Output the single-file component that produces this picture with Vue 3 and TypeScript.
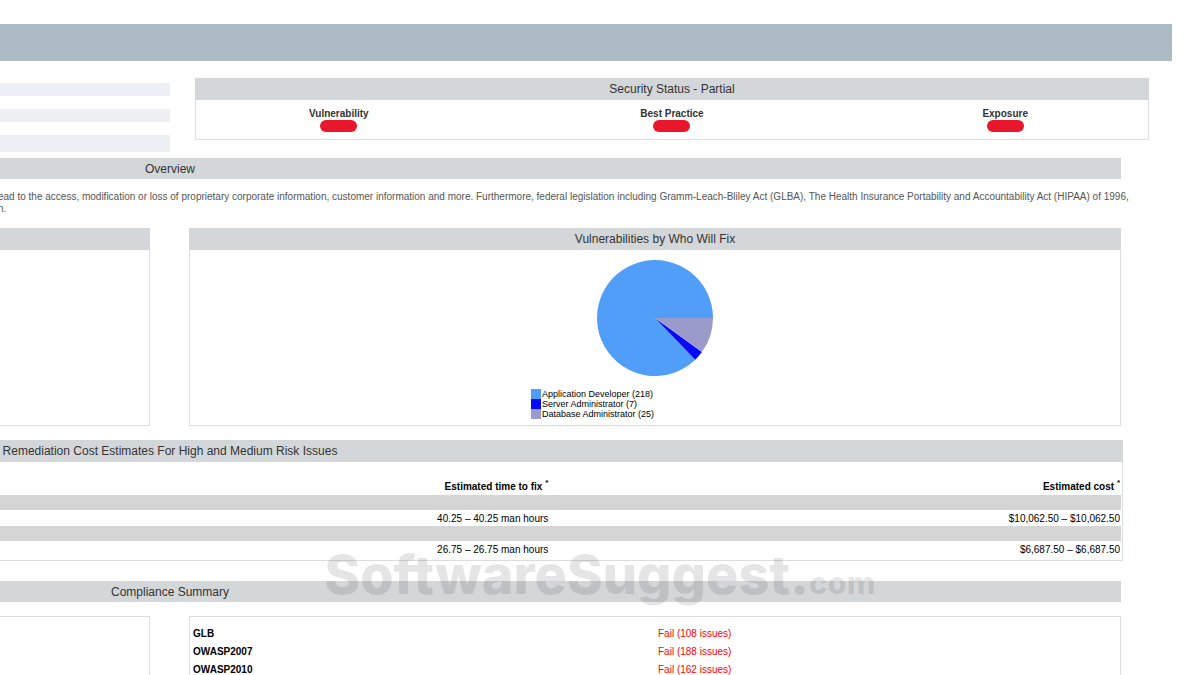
<script setup lang="ts">
interface Status { name: string }
interface Slice { label: string; count: number; color: string }
interface Estimate { time: string; cost: string }
interface Standard { name: string; issues: number }

const statuses: Status[] = [{ name: 'Vulnerability' }, { name: 'Best Practice' }, { name: 'Exposure' }]

const slices: Slice[] = [
  { label: 'Application Developer', count: 218, color: '#509ef8' },
  { label: 'Server Administrator', count: 7, color: '#0808fa' },
  { label: 'Database Administrator', count: 25, color: '#9a9acb' },
]

const estimates: Estimate[] = [
  { time: '40.25 – 40.25 man hours', cost: '$10,062.50 – $10,062.50' },
  { time: '26.75 – 26.75 man hours', cost: '$6,687.50 – $6,687.50' },
]

const standards: Standard[] = [
  { name: 'GLB', issues: 108 },
  { name: 'OWASP2007', issues: 188 },
  { name: 'OWASP2010', issues: 162 },
]

const total = slices.reduce((sum, s) => sum + s.count, 0)
const radius = 58

// Slices run counter-clockwise, starting at three o'clock.
function point(fraction: number): string {
  const angle = fraction * Math.PI * 2
  return `${radius + radius * Math.cos(angle)} ${radius - radius * Math.sin(angle)}`
}

let start = 0
const wedges = slices.map((s) => {
  const from = start / total
  start += s.count
  const to = start / total
  const large = to - from > 0.5 ? 1 : 0
  return {
    color: s.color,
    d: `M${radius} ${radius}L${point(from)}A${radius} ${radius} 0 ${large} 0 ${point(to)}Z`,
  }
})
</script>

<template>
  <main class="page">
    <header class="topbar"></header>

    <div class="summary">
      <div class="fields">
        <div class="field"></div>
        <div class="field"></div>
        <div class="field tall"></div>
      </div>
      <section class="panel status">
        <h2 class="band">Security Status - Partial</h2>
        <div class="status-row">
          <div v-for="s in statuses" :key="s.name" class="status-item">
            <strong>{{ s.name }}</strong>
            <span class="pill"></span>
          </div>
        </div>
      </section>
    </div>

    <div class="report">
      <section>
        <h2 class="band short"><span class="lead">Overview</span></h2>
        <p class="overview">
          <span class="line">ead to the access, modification or loss of proprietary corporate information, customer information and more. Furthermore, federal legislation including Gramm-Leach-Bliley Act (GLBA), The Health Insurance Portability and Accountability Act (HIPAA) of 1996,</span>
          <span class="line">n.</span>
        </p>
      </section>

      <div class="columns charts">
        <section class="panel side"><div class="band"></div></section>
        <section class="panel">
          <h2 class="band">Vulnerabilities by Who Will Fix</h2>
          <div class="chart">
            <svg class="pie" viewBox="0 0 116 116" role="img" aria-label="Vulnerabilities by who will fix">
              <path v-for="w in wedges" :key="w.color" :d="w.d" :fill="w.color" />
            </svg>
            <ul class="legend">
              <li v-for="s in slices" :key="s.label">
                <i class="swatch" :style="{ background: s.color }"></i>{{ s.label }} ({{ s.count }})
              </li>
            </ul>
          </div>
        </section>
      </div>

      <section class="panel remediation">
        <h2 class="band"><span class="lead">Remediation Cost Estimates For High and Medium Risk Issues</span></h2>
        <table class="costs">
          <thead>
            <tr>
              <th class="time" scope="col">Estimated time to fix <sup>*</sup></th>
              <th scope="col">Estimated cost <sup>*</sup></th>
            </tr>
          </thead>
          <tbody v-for="e in estimates" :key="e.time">
            <tr class="group"><td colspan="2"></td></tr>
            <tr><td>{{ e.time }}</td><td>{{ e.cost }}</td></tr>
          </tbody>
        </table>
      </section>

      <h2 class="band short"><span class="lead">Compliance Summary</span></h2>
      <div class="columns compliance">
        <section class="panel side"></section>
        <section class="panel">
          <table class="standards">
            <tbody>
              <tr v-for="s in standards" :key="s.name">
                <th scope="row">{{ s.name }}</th>
                <td>Fail ({{ s.issues }} issues)</td>
              </tr>
            </tbody>
          </table>
        </section>
      </div>
    </div>

    <div class="watermark">SoftwareSuggest.<small>com</small></div>
  </main>
</template>

<style>
body {
  margin: 0;
  background: #fff;
}
</style>

<style scoped>
* {
  box-sizing: border-box;
}
.page {
  position: relative;
  height: 100vh;
  padding-top: 24px;
  overflow: hidden;
  font: 10px/12px "Liberation Sans", Arial, sans-serif;
  color: #000;
}
.topbar {
  height: 37px;
  margin-right: 28px;
  background: #adbbc5;
}
.summary {
  display: flex;
  align-items: flex-start;
  gap: 25px;
  height: 97px;
  padding: 17px 51px 0 0;
}
.fields {
  flex: 0 0 170px;
  display: grid;
  gap: 13px;
  padding-top: 5px;
}
.field {
  height: 13px;
  background: #ecf0f5;
}
.field.tall {
  height: 17px;
}
.panel {
  border: 1px solid #dadcdd;
  border-top: 0;
}
.status {
  flex: 1;
  height: 62px;
}
.band {
  height: 22px;
  margin: 0 -1px;
  background: #d3d7da;
  font-size: 12px;
  font-weight: 400;
  line-height: 23px;
  text-align: center;
  color: #333;
}
.band.short {
  height: 21px;
  margin: 0;
}
.lead {
  display: block;
  width: 340px;
  white-space: nowrap;
}
.remediation .band {
  margin-left: 0;
}
.status-row {
  display: grid;
  grid-template-columns: 3fr 4fr 3fr;
  padding-top: 8px;
}
.status-item {
  display: flex;
  flex-direction: column;
  align-items: center;
  color: #333;
}
.pill {
  width: 37px;
  height: 12px;
  border-radius: 6px;
  background: #e9172b;
}
.report {
  padding-right: 79px;
}
.overview {
  margin: 12px 0 13px -2px;
  color: #555;
  white-space: nowrap;
}
.line {
  display: block;
}
.columns {
  display: grid;
  grid-template-columns: 150px 1fr;
  gap: 39px;
}
.side {
  border-left: 0;
}
.side .band {
  margin-left: 0;
}
.charts {
  height: 198px;
}
.chart {
  display: flex;
  flex-direction: column;
  align-items: center;
  gap: 13px;
  padding-top: 10px;
}
.pie {
  width: 116px;
  height: 116px;
}
.legend {
  width: 248px;
  margin: 0;
  padding: 0;
  list-style: none;
  font-size: 9px;
  line-height: 10px;
}
.legend li {
  display: flex;
  gap: 1px;
}
.swatch {
  width: 10px;
  height: 10px;
}
.remediation {
  height: 121px;
  margin: 14px -2px 20px 0;
  border-left: 0;
}
.costs {
  width: calc(100% - 1px);
  border-collapse: collapse;
  text-align: right;
}
.costs td {
  height: 16px;
  padding: 2px 1px 0;
}
.costs th {
  height: 33px;
  padding: 0 1px 2px;
  vertical-align: bottom;
}
.costs .time {
  width: 49%;
}
.costs .group td {
  height: 15px;
  background: #d5d5d5;
}
sup {
  font-size: 8px;
  line-height: 0;
  vertical-align: 5px;
}
.compliance {
  height: 140px;
  margin-top: 14px;
}
.compliance .panel {
  border-top: 1px solid #dadcdd;
}
.standards {
  width: 100%;
  margin-top: 8px;
  border-collapse: collapse;
  text-align: left;
}
.standards th,
.standards td {
  width: 50%;
  height: 18px;
  padding: 0 3px;
}
.standards td {
  color: #f00;
}
.watermark {
  position: absolute;
  left: 50%;
  bottom: 60px;
  transform: translateX(-50%);
  font: 800 54px/64px Inter, sans-serif;
  color: rgba(0, 0, 0, 0.1);
  white-space: nowrap;
  pointer-events: none;
}
.watermark small {
  font-size: 31px;
}
</style>
